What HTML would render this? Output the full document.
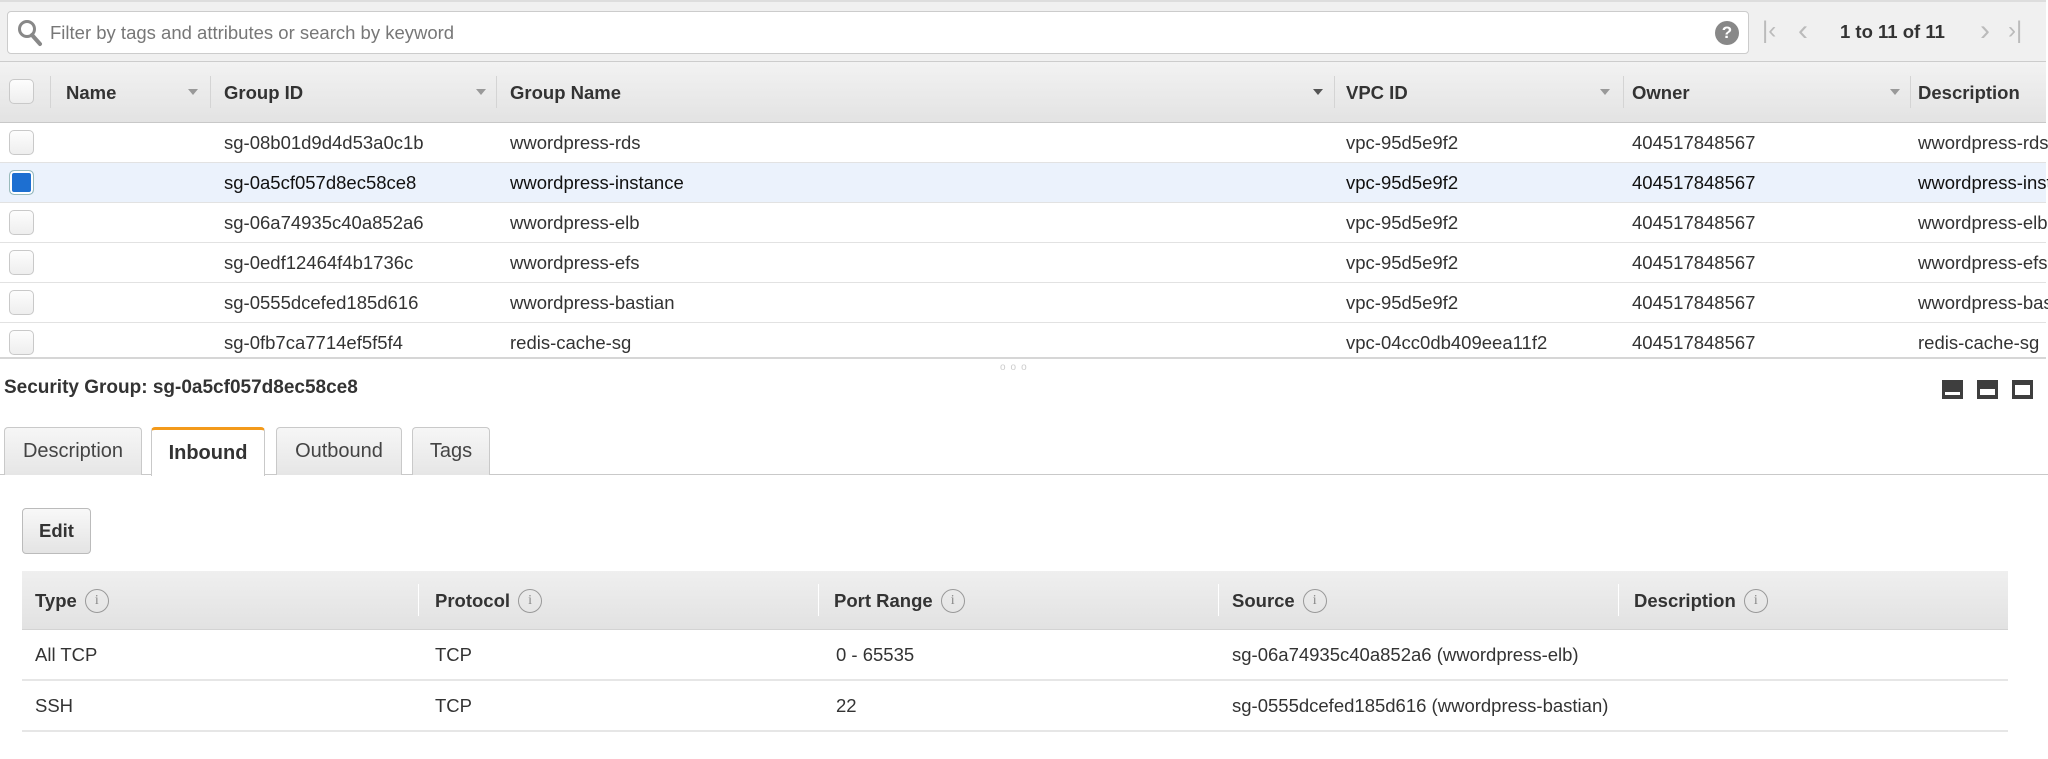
<!DOCTYPE html>
<html><head><meta charset="utf-8"><style>
*{box-sizing:border-box;margin:0;padding:0}
body{width:2048px;height:759px;background:#fff;font-family:"Liberation Sans",Arial,sans-serif;color:#333;position:relative;overflow:hidden;font-size:18.5px}
.a{position:absolute;white-space:nowrap}
.top{position:absolute;left:0;top:0;width:2046px;height:62px;background:#f0f0f0;border-top:2px solid #ddd;border-bottom:1px solid #ccc}
.search{position:absolute;left:7px;top:9px;width:1742px;height:43px;background:#fff;border:1px solid #ccc;border-radius:4px}
.hdr{position:absolute;left:0;top:62px;width:2046px;height:61px;background:linear-gradient(#f2f2f2,#e3e3e3);border-bottom:1px solid #c8c8c8}
.hdr .a{font-weight:bold;color:#333;top:20px}
.div{position:absolute;top:14px;width:1px;height:32px;background:#d4d4d4}
.arr{position:absolute;top:27px;width:0;height:0;border-left:5px solid transparent;border-right:5px solid transparent;border-top:6px solid #999}
.row{position:absolute;left:0;width:2046px;height:40px;border-bottom:1px solid #e2e2e2}
.row .a{top:9px}
.cb{position:absolute;left:9px;top:7px;width:25px;height:25px;border:1px solid #c9c9c9;border-radius:5px;background:linear-gradient(#fdfdfd,#eee)}
.tab{position:absolute;top:427px;height:48px;border:1px solid #c9c9c9;border-bottom:none;border-radius:4px 4px 0 0;background:linear-gradient(#f6f6f6,#e6e6e6);font-size:20px;text-align:center;line-height:46px;color:#444}
.ih{position:absolute;left:22px;top:571px;width:1996px;height:59px;background:linear-gradient(#efefef,#e2e2e2);border-bottom:1px solid #d3d3d3}
.ih .a{top:18px;font-weight:bold;line-height:24px}
.i{display:inline-block;width:24px;height:24px;border:1.5px solid #999;border-radius:50%;font-size:14px;line-height:21px;text-align:center;color:#888;font-weight:normal;margin-left:8px;vertical-align:top;font-family:"Liberation Serif",serif}
.ir{position:absolute;left:22px;width:1996px;height:51px;border-bottom:2px solid #e6e6e6}
.ir .a{top:14px}
.pi{position:absolute;top:380px;width:21px;height:19px;background:#3e3e3e}
.pi i{position:absolute;left:3px;background:#fff;width:15px}
</style></head><body>
<div class="top">
 <div class="search">
  <svg class="a" style="left:9px;top:7px" width="26" height="28" viewBox="0 0 26 28"><circle cx="10" cy="10" r="7.5" fill="none" stroke="#888" stroke-width="3"/><path d="M15 16 L23 25" stroke="#888" stroke-width="4" stroke-linecap="round"/></svg>
  <div class="a" style="left:42px;top:10px;color:#777">Filter by tags and attributes or search by keyword</div>
  <div class="a" style="left:1707px;top:9px;width:24px;height:24px;border-radius:50%;background:#888;color:#fff;font-weight:bold;font-size:17px;text-align:center;line-height:24px">?</div>
 </div>
 <div class="a" style="left:1762px;top:15px;color:#bbb;font-size:24px">|&lsaquo;</div>
 <div class="a" style="left:1798px;top:12px;color:#bbb;font-size:30px">&lsaquo;</div>
 <div class="a" style="left:1840px;top:19px;font-weight:bold;color:#333">1 to 11 of 11</div>
 <div class="a" style="left:1980px;top:12px;color:#bbb;font-size:30px">&rsaquo;</div>
 <div class="a" style="left:2008px;top:15px;color:#bbb;font-size:24px">&rsaquo;|</div>
</div>
<div class="hdr">
 <div class="cb" style="top:17px"></div>
 <div class="div" style="left:50px"></div><div class="a" style="left:66px">Name</div><div class="arr" style="left:188px"></div>
 <div class="div" style="left:210px"></div><div class="a" style="left:224px">Group ID</div><div class="arr" style="left:476px"></div>
 <div class="div" style="left:496px"></div><div class="a" style="left:510px">Group Name</div><div class="arr" style="left:1313px;border-top-color:#555"></div>
 <div class="div" style="left:1334px"></div><div class="a" style="left:1346px">VPC ID</div><div class="arr" style="left:1600px"></div>
 <div class="div" style="left:1623px"></div><div class="a" style="left:1632px">Owner</div><div class="arr" style="left:1890px"></div>
 <div class="div" style="left:1910px"></div><div class="a" style="left:1918px">Description</div>
</div>
<div class="row" style="top:123px"><div class="cb"></div><div class="a" style="left:224px">sg-08b01d9d4d53a0c1b</div><div class="a" style="left:510px">wwordpress-rds</div><div class="a" style="left:1346px">vpc-95d5e9f2</div><div class="a" style="left:1632px">404517848567</div><div class="a" style="left:1918px">wwordpress-rds</div></div>
<div class="row" style="top:163px;background:#ebf2fc"><div class="cb" style="background:#1d6fd1;border-color:#9bb;box-shadow:inset 0 0 0 2px #fff"></div><div class="a" style="left:224px;color:#111">sg-0a5cf057d8ec58ce8</div><div class="a" style="left:510px;color:#111">wwordpress-instance</div><div class="a" style="left:1346px;color:#111">vpc-95d5e9f2</div><div class="a" style="left:1632px;color:#111">404517848567</div><div class="a" style="left:1918px;color:#111">wwordpress-instance</div></div>
<div class="row" style="top:203px"><div class="cb"></div><div class="a" style="left:224px">sg-06a74935c40a852a6</div><div class="a" style="left:510px">wwordpress-elb</div><div class="a" style="left:1346px">vpc-95d5e9f2</div><div class="a" style="left:1632px">404517848567</div><div class="a" style="left:1918px">wwordpress-elb</div></div>
<div class="row" style="top:243px"><div class="cb"></div><div class="a" style="left:224px">sg-0edf12464f4b1736c</div><div class="a" style="left:510px">wwordpress-efs</div><div class="a" style="left:1346px">vpc-95d5e9f2</div><div class="a" style="left:1632px">404517848567</div><div class="a" style="left:1918px">wwordpress-efs</div></div>
<div class="row" style="top:283px"><div class="cb"></div><div class="a" style="left:224px">sg-0555dcefed185d616</div><div class="a" style="left:510px">wwordpress-bastian</div><div class="a" style="left:1346px">vpc-95d5e9f2</div><div class="a" style="left:1632px">404517848567</div><div class="a" style="left:1918px">wwordpress-bastian</div></div>
<div class="row" style="top:323px;height:36px;border-bottom:2px solid #d6d6d6;overflow:hidden"><div class="cb"></div><div class="a" style="left:224px">sg-0fb7ca7714ef5f5f4</div><div class="a" style="left:510px">redis-cache-sg</div><div class="a" style="left:1346px">vpc-04cc0db409eea11f2</div><div class="a" style="left:1632px">404517848567</div><div class="a" style="left:1918px">redis-cache-sg</div></div>
<div class="a" style="left:1000px;top:362px;color:#ccc;font-size:10px;letter-spacing:5px">ooo</div>
<div class="a" style="left:4px;top:377px;font-weight:bold;font-size:19px;color:#333">Security Group: sg-0a5cf057d8ec58ce8</div>
<div class="pi" style="left:1942px"><i style="top:12px;height:3px"></i></div>
<div class="pi" style="left:1977px"><i style="top:9px;height:6px"></i></div>
<div class="pi" style="left:2012px"><i style="top:5px;height:10px"></i></div>
<div class="a" style="left:0;top:474px;width:2048px;height:1px;background:#c9c9c9"></div>
<div class="tab" style="left:4px;width:138px">Description</div>
<div class="tab" style="left:151px;width:114px;background:#fff;border-top:3px solid #f39a1b;height:49px;font-weight:bold;color:#333">Inbound</div>
<div class="tab" style="left:276px;width:126px">Outbound</div>
<div class="tab" style="left:412px;width:78px">Tags</div>
<div class="a" style="left:22px;top:508px;width:69px;height:46px;border:1px solid #bbb;border-radius:4px;background:linear-gradient(#f8f8f8,#e4e4e4);font-weight:bold;text-align:center;line-height:44px;color:#333">Edit</div>
<div class="ih" style="width:1986px">
 <div class="a" style="left:13px">Type<span class="i">i</span></div>
 <div class="div" style="left:396px;top:13px;background:#fff"></div>
 <div class="a" style="left:413px">Protocol<span class="i">i</span></div>
 <div class="div" style="left:796px;top:13px;background:#fff"></div>
 <div class="a" style="left:812px">Port Range<span class="i">i</span></div>
 <div class="div" style="left:1196px;top:13px;background:#fff"></div>
 <div class="a" style="left:1210px">Source<span class="i">i</span></div>
 <div class="div" style="left:1596px;top:13px;background:#fff"></div>
 <div class="a" style="left:1612px">Description<span class="i">i</span></div>
</div>
<div class="ir" style="top:630px;width:1986px"><div class="a" style="left:13px">All TCP</div><div class="a" style="left:413px">TCP</div><div class="a" style="left:814px">0 - 65535</div><div class="a" style="left:1210px">sg-06a74935c40a852a6 (wwordpress-elb)</div></div>
<div class="ir" style="top:681px;width:1986px"><div class="a" style="left:13px">SSH</div><div class="a" style="left:413px">TCP</div><div class="a" style="left:814px">22</div><div class="a" style="left:1210px;width:383px;overflow:hidden">sg-0555dcefed185d616 (wwordpress-bastian)</div></div>
</body></html>
